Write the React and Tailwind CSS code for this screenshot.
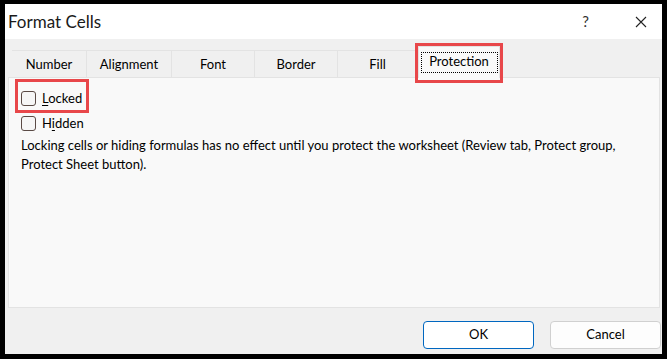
import React from "react";

const FONT = { fontFamily: "Lato, 'Noto Sans', 'Liberation Sans', sans-serif" };

function Checkbox() {
  return (
    <span className="inline-block h-[15px] w-[15px] shrink-0 rounded-[3px] border border-[#5a4a45] bg-[#f6f6f6]" />
  );
}

const tabs = [
  { label: "Number", w: "w-[75px]" },
  { label: "Alignment", w: "w-[85px]" },
  { label: "Font", w: "w-[83px]" },
  { label: "Border", w: "w-[83px]" },
  { label: "Fill", w: "w-[80px]" },
];

export default function App() {
  return (
    <div
      className="h-[359px] w-[667px] overflow-hidden bg-black pb-[5px] pl-[5px] pr-[5px] pt-[4px] text-black"
      style={FONT}
    >
      <div className="relative flex h-full flex-col bg-[#f0f0f0]">
        {/* title bar */}
        <div className="flex h-[35px] shrink-0 items-center bg-white pl-[3px]">
          <span className="text-[17px] leading-none text-[#1a1a1a]">Format Cells</span>
          <span className="ml-auto mr-[46px] text-[15px] leading-none text-[#333]">?</span>
          <svg width="12" height="12" viewBox="0 0 12 12" className="mr-[15px]">
            <path d="M1 1 L11 11 M11 1 L1 11" stroke="#222" strokeWidth="1.1" fill="none" />
          </svg>
        </div>

        {/* tabs */}
        <div className="mt-[11px] flex h-[27px] shrink-0 items-end pl-[7px]">
          {tabs.map((t) => (
            <div
              key={t.label}
              className={`flex h-[27px] items-center justify-center border-r border-t border-[#e3e3e3] pt-px text-[13px] ${t.w}`}
            >
              {t.label}
            </div>
          ))}
          <div className="relative z-10 -mb-px flex h-[32px] w-[82px] items-center justify-center border-x border-t border-[#e3e3e3] bg-[#f9f9f9] pb-[1px]">
            <span className="flex h-[21px] w-[77px] items-center justify-center border border-dotted border-black text-[13px]">
              Protection
            </span>
          </div>
        </div>

        {/* panel */}
        <div className="relative ml-[3px] mr-[2px] h-[231px] shrink-0 border border-[#e3e3e3] bg-[#f9f9f9] pl-[12px] pt-[8px] text-[13px]">
          <div className="flex h-[25px] items-center gap-[6px]">
            <Checkbox />
            <span>
              <span className="underline underline-offset-2">L</span>ocked
            </span>
          </div>
          <div className="flex h-[25px] items-center gap-[6px]">
            <Checkbox />
            <span>
              H<span className="underline underline-offset-2">i</span>dden
            </span>
          </div>
          <p className="leading-[19px]">
            Locking cells or hiding formulas has no effect until you protect the worksheet (Review tab, Protect group,
            <br />
            Protect Sheet button).
          </p>
          <div className="pointer-events-none absolute left-[6px] top-[1px] h-[34px] w-[74px] border-[3px] border-[#e8474a]" />
        </div>

        {/* buttons */}
        <div className="mt-[13px] flex justify-end gap-[16px] pr-px">
          <button className="flex h-[28px] w-[111px] items-center justify-center rounded-[4px] border border-[#0067c0] bg-white text-[13px]">
            OK
          </button>
          <button className="flex h-[28px] w-[111px] items-center justify-center rounded-[4px] border border-[#d0d0d0] bg-[#fdfdfd] text-[13px]">
            Cancel
          </button>
        </div>

        {/* annotation around Protection tab */}
        <div className="pointer-events-none absolute left-[410px] top-[39px] z-20 h-[40px] w-[88px] border-[3px] border-[#e8474a]" />
      </div>
    </div>
  );
}
